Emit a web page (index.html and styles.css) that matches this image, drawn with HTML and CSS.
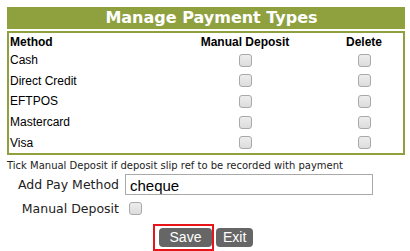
FILE: index.html
```html
<!DOCTYPE html>
<html lang="en">
<head>
  <meta charset="UTF-8">
  <title>Manage Payment Types</title>
  <link rel="stylesheet" href="styles.css">
</head>
<body>
  <div class="panel">
    <h1 class="title">Manage Payment Types</h1>
    <div class="types">
      <div class="row head">
        <span class="col-method">Method</span>
        <span class="col-manual">Manual Deposit</span>
        <span class="col-delete">Delete</span>
      </div>
      <div class="row">
        <span class="col-method">Cash</span>
        <span class="col-manual"><input type="checkbox"></span>
        <span class="col-delete"><input type="checkbox"></span>
      </div>
      <div class="row">
        <span class="col-method">Direct Credit</span>
        <span class="col-manual"><input type="checkbox"></span>
        <span class="col-delete"><input type="checkbox"></span>
      </div>
      <div class="row">
        <span class="col-method">EFTPOS</span>
        <span class="col-manual"><input type="checkbox"></span>
        <span class="col-delete"><input type="checkbox"></span>
      </div>
      <div class="row">
        <span class="col-method">Mastercard</span>
        <span class="col-manual"><input type="checkbox"></span>
        <span class="col-delete"><input type="checkbox"></span>
      </div>
      <div class="row">
        <span class="col-method">Visa</span>
        <span class="col-manual"><input type="checkbox"></span>
        <span class="col-delete"><input type="checkbox"></span>
      </div>
    </div>
    <p class="hint">Tick Manual Deposit if deposit slip ref to be recorded with payment</p>
    <div class="field">
      <label for="newMethod">Add Pay Method</label>
      <input type="text" id="newMethod" class="text-input" value="cheque">
    </div>
    <div class="field">
      <label for="newManual">Manual Deposit</label>
      <input type="checkbox" id="newManual">
    </div>
    <div class="buttons">
      <span class="focus-ring"><button class="btn">Save</button></span>
      <button class="btn">Exit</button>
    </div>
  </div>
</body>
</html>
```

FILE: styles.css
```css
* { margin: 0; padding: 0; box-sizing: border-box; }
body { background: #fff; color: #000; font-family: 'Liberation Sans', Arial, sans-serif; }
.panel { width: 398px; margin: 7px 0 0 7px; }
.title { height: 22px; line-height: 22px; background: #8fa13f; color: #fff; text-align: center; font-family: 'DejaVu Sans', Verdana, sans-serif; font-size: 16px; font-weight: bold; padding-left: 11px; }
.types { margin-top: 2px; border: 2px solid #8fa13f; }
.row { display: grid; grid-template-columns: 181px 110px 103px; height: 20.6px; align-items: center; font-size: 12px; }
.row.head { height: 17px; font-weight: bold; }
.col-method { padding-left: 1px; }
.col-manual { text-align: center; }
.col-delete { text-align: center; padding-left: 25px; }
input[type="checkbox"] { -webkit-appearance: none; appearance: none; width: 13px; height: 13px; border: 1px solid #a9a9a9; border-radius: 3px; background: linear-gradient(#ededed, #dcdcdc); display: block; margin: 0 auto; }
.hint { margin-top: 4px; font-family: 'DejaVu Sans', Verdana, sans-serif; font-size: 10px; color: #222; height: 14px; line-height: 14px; }
.field { display: flex; align-items: center; height: 24px; font-family: 'DejaVu Sans', Verdana, sans-serif; font-size: 12.5px; color: #222; }
.field label { width: 112px; text-align: right; margin-right: 6px; }
.field #newManual { margin: 0 0 0 4px; }
.text-input { width: 248px; height: 21px; border: 1px solid #a9a9a9; padding: 2px 4px 0; font-family: 'Liberation Sans', Arial, sans-serif; font-size: 15px; color: #000; text-decoration: underline wavy #e33; text-decoration-thickness: 1px; text-underline-offset: 2px; }
.buttons { display: flex; align-items: center; margin: 3px 0 0 146px; gap: 2px; }
.focus-ring { display: flex; border: 2px solid #e8141a; padding: 2px 0 2px 4px; }
.btn { height: 19px; padding: 0 7px; border: none; border-radius: 4px; background: #666; color: #fff; font-family: 'Liberation Sans', Arial, sans-serif; font-size: 14px; cursor: pointer; }
.focus-ring .btn { padding: 0 10px; width: 53px; }
```
